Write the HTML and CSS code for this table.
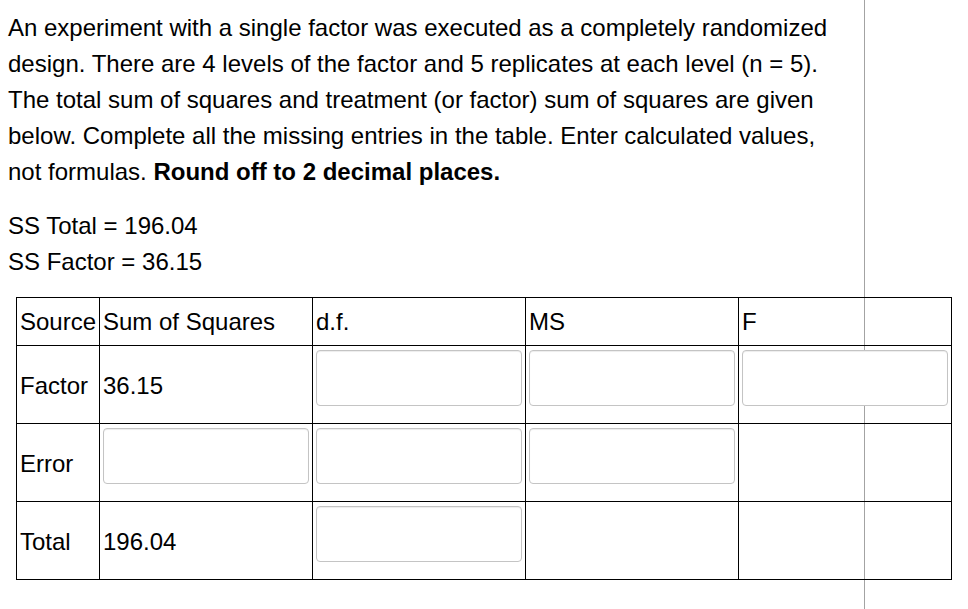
FILE: index.html
```html
<!DOCTYPE html>
<html>
<head>
<meta charset="utf-8">
<link rel="stylesheet" href="styles.css">
</head>
<body>
<div class="page">
  <p class="question">An experiment with a single factor was executed as a completely randomized design. There are 4 levels of the factor and 5 replicates at each level (n = 5). The total sum of squares and treatment (or factor) sum of squares are given below. Complete all the missing entries in the table. Enter calculated values, not formulas. <b>Round off to 2 decimal places.</b></p>
  <p class="given">SS Total = 196.04<br>SS Factor = 36.15</p>
  <table class="anova">
    <tr class="head">
      <td class="c-src">Source</td>
      <td>Sum of Squares</td>
      <td>d.f.</td>
      <td>MS</td>
      <td>F</td>
    </tr>
    <tr>
      <td class="c-src">Factor</td>
      <td>36.15</td>
      <td><input class="box" type="text"></td>
      <td><input class="box" type="text"></td>
      <td><input class="box" type="text"></td>
    </tr>
    <tr>
      <td class="c-src">Error</td>
      <td><input class="box" type="text"></td>
      <td><input class="box" type="text"></td>
      <td><input class="box" type="text"></td>
      <td></td>
    </tr>
    <tr>
      <td class="c-src">Total</td>
      <td>196.04</td>
      <td><input class="box" type="text"></td>
      <td></td>
      <td></td>
    </tr>
  </table>
</div>
</body>
</html>
```

FILE: styles.css
```css
html, body {
  margin: 0;
  padding: 0;
  background: #fff;
}

body {
  font-family: "Liberation Sans", Arial, sans-serif;
  font-size: 24px;
  line-height: 36px;
  color: #000;
}

.page {
  box-sizing: border-box;
  width: 865px;
  min-height: 609px;
  border-right: 1px solid #a3a3a3;
  padding: 10px 0 0 8px;
}

.question {
  margin: 0;
  width: 832px;
}

.given {
  margin: 18px 0 0 0;
}

.anova {
  margin: 17px 0 0 8px;
  border-collapse: collapse;
  width: 936px;
}

.anova td {
  border: 1px solid #000;
  padding: 4px 3px 3px 3px;
  vertical-align: middle;
  width: 206px;
  line-height: 27px;
}

.anova td.c-src {
  width: 77px;
  padding-left: 3px;
  padding-right: 2px;
}

.anova tr.head td {
  height: 43px;
  padding-top: 2px;
  padding-bottom: 2px;
}

.box {
  display: block;
  box-sizing: border-box;
  width: 206px;
  height: 56px;
  margin: 0 0 14px 0;
  border: 1px solid #c4c4c4;
  border-radius: 4px;
  box-shadow: inset 0 1px 1px rgba(0, 0, 0, 0.075);
  background: #fff;
  font: inherit;
  padding: 0 8px;
}
```
